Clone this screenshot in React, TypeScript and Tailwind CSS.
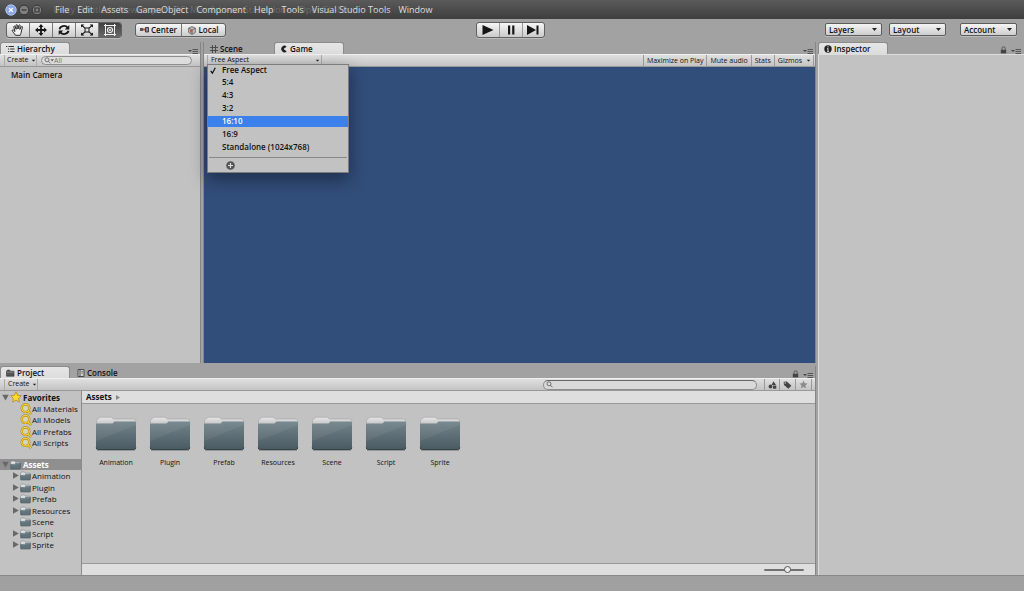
import React, { useState, type ReactNode } from "react";

const MENUS = ["File", "Edit", "Assets", "GameObject", "Component", "Help", "Tools", "Visual Studio Tools", "Window"];
const ASPECTS = ["Free Aspect", "5:4", "4:3", "3:2", "16:10", "16:9", "Standalone (1024x768)"];
const FOLDERS = ["Animation", "Plugin", "Prefab", "Resources", "Scene", "Script", "Sprite"];
const SEARCHES = ["All Materials", "All Models", "All Prefabs", "All Scripts"];

const STRIP = "flex h-[13px] shrink-0 items-center border-y border-t-[#efefef] border-b-[#999] bg-linear-to-b from-[#dfdfdf] to-[#c4c4c4] text-[7px] font-medium";
const GROUP = "flex overflow-hidden rounded-[3px] border border-[#606060] bg-linear-to-b from-[#f6f6f6] to-[#cbcbcb] shadow-[0_1px_0_#bbb]";

function Caret({ className = "" }: { className?: string }) {
  return (
    <svg viewBox="0 0 5 3" className={`h-[3px] w-[5px] shrink-0 ${className}`} aria-hidden="true">
      <path d="M0 0h5L2.5 3z" fill="#222" />
    </svg>
  );
}

function Disclosure({ open = false }: { open?: boolean }) {
  return (
    <svg viewBox="0 0 7 7" className="h-[7px] w-[7px] shrink-0" aria-hidden="true">
      <path d={open ? "M.2.8h6.6L3.5 6.5z" : "M1 .2v6.6L6.8 3.5z"} fill="#686868" />
    </svg>
  );
}

function Lock() {
  return (
    <svg viewBox="0 0 7 8" className="h-[8px] w-[7px]" aria-hidden="true">
      <path d="M2 4V2.5a1.5 1.5 0 0 1 3.2-.3V4" fill="none" stroke="#555" />
      <path d="M.8 3.8h5.4v3.6H.8z" fill="#444" />
    </svg>
  );
}

function PaneMenu() {
  return (
    <svg viewBox="0 0 10 6" className="h-[6px] w-[10px]" aria-hidden="true">
      <path d="M0 2h4L2 4z" fill="#444" />
      <path d="M4.5 1.5H10M4.5 3.5H10M4.5 5.5H10" stroke="#555" />
    </svg>
  );
}

function SmallFolder() {
  return (
    <svg viewBox="0 0 11 10" className="h-[10px] w-[11px] shrink-0" aria-hidden="true">
      <path d="M.5 8V2.5L1.5 1h3l1 1.2h4.5v6z" fill="#dde1e2" stroke="#7b8589" strokeWidth=".6" />
      <path d="M.7 4.4h4l.8-1h5l-.3 5.6H.8z" fill="#61737b" stroke="#465860" strokeWidth=".6" />
      <path d="M1.2 4.8h4l.6-.9h4.2" stroke="#95a3aa" strokeWidth=".5" fill="none" />
    </svg>
  );
}

function SearchGlyph() {
  return (
    <svg viewBox="0 0 12 12" className="h-[12px] w-[12px] shrink-0" aria-hidden="true">
      <circle cx="5.5" cy="5.2" r="3.8" fill="#d6d2bd" stroke="#9c7a0c" strokeWidth="2.2" />
      <path d="M8.2 8.2l2.8 2.8" stroke="#9c7a0c" strokeWidth="2.4" />
      <circle cx="5.5" cy="5.2" r="3.8" fill="none" stroke="#f7d436" strokeWidth="1.3" />
      <path d="M8.2 8.2l2.6 2.6" stroke="#f7d436" strokeWidth="1.4" />
    </svg>
  );
}

function Lens({ arrow = false }: { arrow?: boolean }) {
  return (
    <svg viewBox="0 0 10 7" className="h-[7px] w-[10px] shrink-0" aria-hidden="true">
      <circle cx="3" cy="2.8" r="2" fill="none" stroke="#666" strokeWidth=".9" />
      <path d="M4.5 4.3l2 2" stroke="#666" strokeWidth="1" />
      {arrow && <path d="M6.5 2.2H10L8.2 4.4z" fill="#666" />}
    </svg>
  );
}

function BigFolder({ id }: { id: string }) {
  return (
    <svg viewBox="0 0 42 36" className="h-[36px] w-[42px]" aria-hidden="true">
      <defs>
        <linearGradient id={`${id}-body`} x1="0" y1="0" x2="0" y2="1">
          <stop offset="0" stopColor="#72838a" />
          <stop offset="1" stopColor="#4a5a62" />
        </linearGradient>
        <linearGradient id={`${id}-tab`} x1="0" y1="0" x2="0" y2="1">
          <stop offset="0" stopColor="#e6e6e6" />
          <stop offset="1" stopColor="#bdbdbd" />
        </linearGradient>
      </defs>
      <path d="M1.5 9V5Q1.5 2.5 3.5 2.5L5 1.2h11L18.5 3H39q1.7 0 1.7 2v5H1.5z" fill={`url(#${id}-tab)`} stroke="#a2a2a2" strokeWidth=".6" />
      <path d="M1 8.2Q1 7.4 2 7.4h15.5L19.5 5.5H39.5q1.5 0 1.5 1.2V31.5q0 2-2 2H3q-2 0-2-2z" fill={`url(#${id}-body)`} />
      <path d="M1.3 25L41 9V6.7q0-1.2-1.5-1.2H19.5L17.5 7.4H2q-1 0-1 .8z" fill="#fff" opacity=".06" />
      <path d="M1.2 31.5q0 2 2 2h35.6q2 0 2-2" fill="none" stroke="#34434a" />
      <path d="M2 34.5h38" stroke="#8d8d8d" strokeWidth=".8" />
    </svg>
  );
}

function Tab({ icon, label, active = false }: { icon: ReactNode; label: string; active?: boolean }) {
  return (
    <button
      type="button"
      role="tab"
      aria-selected={active}
      className={`flex h-[12px] w-[70px] items-center gap-[2px] rounded-t-[3px] px-[5px] text-left text-[8px] leading-[11px] font-semibold ${
        active ? "border-x border-t border-[#8b8b8b] bg-linear-to-b from-[#e6e6e6] to-[#dcdcdc]" : "border-x border-t border-transparent"
      }`}
    >
      {icon}
      {label}
    </button>
  );
}

function ToolIcon({ kind }: { kind: string }) {
  return (
    <svg viewBox="0 0 14 12" className="h-[12px] w-[14px]" fill="none" stroke="#161616" aria-hidden="true">
      {kind === "Hand" && (
        <path
          d="M4.5 11.3C3.5 9.5 1.8 8 1.3 6.8c-.2-.9.8-1.2 1.5-.4L4 7.5 2.8 3c-.2-1 .9-1.3 1.3-.4L5.2 5.3 5 1.4c0-1 1.3-1 1.5 0L7 5l.9-3.6c.3-.9 1.4-.6 1.3.4L8.8 5.4l1.5-2.6c.5-.8 1.4-.3 1.2.5L10.4 7c-.2 2-.7 3-1.2 4.3z"
          fill="#f3f3f3"
          strokeWidth=".9"
        />
      )}
      {kind === "Move" && (
        <>
          <path d="M7 2v8M3 6h8" strokeWidth="1.8" />
          <path d="M7 0l2.4 3H4.6zM7 12l2.4-3H4.6zM1 6l3-2.4v4.8zM13 6l-3-2.4v4.8z" fill="#161616" stroke="none" />
        </>
      )}
      {kind === "Rotate" && (
        <>
          <path d="M2.5 5.2C3.2 1.8 8.3.8 10.6 3.6M11.5 6.8C10.8 10.2 5.7 11.2 3.4 8.4" strokeWidth="1.8" />
          <path d="M12.3 1v4.5H7.8zM1.7 11V6.5h4.5z" fill="#161616" stroke="none" />
        </>
      )}
      {kind === "Scale" && (
        <>
          <path d="M5 4h4v4H5z" strokeWidth="1" />
          <path d="M2 1.5l3 2.7M12 1.5L9 4.2M2 10.5l3-2.7M12 10.5L9 7.8" strokeWidth="1.1" />
          <path d="M1 .5h3.4L1 3.6zM13 .5H9.6L13 3.6zM1 11.5h3.4L1 8.4zM13 11.5H9.6L13 8.4z" fill="#161616" stroke="none" />
        </>
      )}
      {kind === "Rect" && (
        <>
          <path d="M2.5 0v12M11.5 0v12M1 1.5h12M1 10.5h12" stroke="#f2f2f2" strokeWidth="1" />
          <circle cx="7" cy="6" r="2.5" stroke="#f2f2f2" strokeWidth="1.1" />
          <circle cx="7" cy="6" r="1" fill="#f2f2f2" stroke="none" />
        </>
      )}
    </svg>
  );
}

function TopSelect({ label }: { label: string }) {
  return (
    <label className="relative flex w-[57px] items-center">
      <select
        aria-label={label}
        className="h-[13px] w-full appearance-none rounded-[2px] border border-[#5c5c5c] bg-linear-to-b from-[#f4f4f4] to-[#cecece] px-[3px] text-[8px] leading-[11px] font-semibold shadow-[0_1px_0_#bbb]"
      >
        <option>{label}</option>
      </select>
      <Caret className="pointer-events-none absolute right-[5px]" />
    </label>
  );
}

function Toolbar() {
  const [tool, setTool] = useState("Rect");
  return (
    <div className="relative flex h-[23px] shrink-0 items-start pt-[3px] pr-[7px] pl-[6px]">
      <div className={GROUP}>
        {["Hand", "Move", "Rotate", "Scale", "Rect"].map((name) => (
          <button
            key={name}
            type="button"
            aria-label={`${name} tool`}
            aria-pressed={tool === name}
            onClick={() => setTool(name)}
            className={`flex h-[14px] w-[23px] items-center justify-center border-r border-[#777] last:w-[22px] last:border-r-0 ${
              tool === name ? "bg-linear-to-b from-[#404040] to-[#6a6a6a]" : ""
            }`}
          >
            <ToolIcon kind={name} />
          </button>
        ))}
      </div>
      <div className={`${GROUP} mt-px ml-[13px] text-[8px] font-semibold`}>
        <button type="button" className="flex h-[12px] w-[46px] items-center justify-center gap-[2px] border-r border-[#777]">
          <svg viewBox="0 0 9 6" className="h-[6px] w-[9px]" aria-hidden="true">
            <path d="M0 1h3v3H0z" fill="#555" />
            <path d="M3 1.5h2v2H3z" fill="#c35436" />
            <path d="M5.5.5h3v4.5h-3z" fill="#8b8b8b" stroke="#222" strokeWidth=".8" />
          </svg>
          Center
        </button>
        <button type="button" className="flex h-[12px] w-[43px] items-center justify-center gap-[2px]">
          <svg viewBox="0 0 8 9" className="h-[9px] w-[8px]" aria-hidden="true">
            <path d="M4 .5l3.4 1.7v4.2L4 8.5.6 6.4V2.2z" fill="#bbb" stroke="#555" strokeWidth=".7" />
            <path d="M.6 2.2L4 4l3.4-1.8M4 4v4.3" fill="none" stroke="#555" strokeWidth=".7" />
            <path d="M2 4h2.4v2.5H2z" fill="#cb5a3c" />
          </svg>
          Local
        </button>
      </div>
      <div className="pointer-events-none absolute inset-x-0 top-[3px] flex justify-center">
        <div className={`${GROUP} pointer-events-auto mr-[4px]`}>
          {[
            ["Play", "M.5 1l11 5-11 5z"],
            ["Pause", "M3 1.5h2.2v9H3zM7.2 1.5h2.2v9H7.2z"],
            ["Step", "M0 1l9 5-9 5zM9.5 1.5h2v9h-2z"],
          ].map(([name, d]) => (
            <button
              key={name}
              type="button"
              aria-label={name}
              className="flex h-[14px] w-[23px] items-center justify-center border-r border-[#999] last:w-[21px] last:border-r-0"
            >
              <svg viewBox="0 0 12 12" className="h-[12px] w-[12px]" aria-hidden="true">
                <path d={d} fill="#151515" />
              </svg>
            </button>
          ))}
        </div>
      </div>
      <div className="ml-auto flex gap-[7px] pt-px">
        <TopSelect label="Layers" />
        <TopSelect label="Layout" />
        <div className="ml-[7px]">
          <TopSelect label="Account" />
        </div>
      </div>
    </div>
  );
}

function Hierarchy() {
  return (
    <section className="flex w-[201px] shrink-0 flex-col border-r border-[#858585]">
      <div className="flex h-[12px] items-end justify-between">
        <Tab
          active
          label="Hierarchy"
          icon={
            <svg viewBox="0 0 9 8" className="h-[8px] w-[9px]" aria-hidden="true">
              <path d="M0 1.5h1.3M2.5 1.5H8M2 4h1.2M4.2 4H8.5M2 6.5h1.2M4.2 6.5H8.5" stroke="#333" />
            </svg>
          }
        />
        <span className="pr-[2px]"><PaneMenu /></span>
      </div>
      <div className={STRIP}>
        <button type="button" className="ml-[4px] flex h-full w-[33px] items-center justify-between border-x border-[#aaa] pl-[2px]">
          Create <Caret className="mb-px scale-75" />
        </button>
        <label className="mr-[8px] ml-[4px] flex h-[9px] flex-1 items-center rounded-full border border-[#8d8d8d] bg-[#dcdcdc] px-[2px]">
          <Lens arrow />
          <input aria-label="Search hierarchy" placeholder="All" className="w-full min-w-0 bg-transparent text-[7px] leading-[7px] outline-none placeholder:text-[#777]" />
        </label>
      </div>
      <ul className="flex-1 bg-[#c2c2c2] pt-[2px] pl-[11px] text-[8px] leading-[11px] font-semibold">
        <li>Main Camera</li>
      </ul>
    </section>
  );
}

function AspectMenu() {
  return (
    <ul role="menu" className="absolute top-[9px] left-[3px] z-10 w-[142px] border border-[#7d7d7d] bg-[#c2c2c2] text-[8px] leading-[10px] font-semibold shadow-[0_6px_16px_rgba(0,0,0,0.4)]">
      {ASPECTS.map((name, i) => (
        <li key={name} role="none" className="h-[13px] first:h-[12px]">
          <button
            type="button"
            role="menuitem"
            className={`flex h-[11px] w-full items-center pb-px text-left ${name === "16:10" ? "bg-[#3c80ec] text-white" : ""}`}
          >
            <span className="w-[14px] pl-[2px]">
              {i === 0 && (
                <svg viewBox="0 0 6 7" className="h-[7px] w-[6px]" aria-hidden="true">
                  <path d="M.7 3.8l1.7 2.4L5.3.7" fill="none" stroke="#111" strokeWidth="1.2" />
                </svg>
              )}
            </span>
            {name}
          </button>
        </li>
      ))}
      <li role="none" className="mx-[1px] mt-[2px] flex h-[15px] items-center border-t border-[#888] pl-[17px]">
        <button type="button" aria-label="Add aspect">
          <svg viewBox="0 0 9 9" className="h-[9px] w-[9px]" aria-hidden="true">
            <circle cx="4.5" cy="4.5" r="4.3" fill="#555" />
            <path d="M4.5 2v5M2 4.5h5" stroke="#ddd" strokeWidth="1.2" />
          </svg>
        </button>
      </li>
    </ul>
  );
}

function GameView() {
  return (
    <section className="ml-[2px] flex min-w-0 flex-1 flex-col border-x border-[#858585]">
      <div className="flex h-[12px] items-end">
        <Tab
          label="Scene"
          icon={
            <svg viewBox="0 0 8 8" className="h-[8px] w-[8px]" aria-hidden="true">
              <path d="M2.5 0v8M5.5 0v8M0 2.5h8M0 5.5h8" stroke="#444" strokeWidth=".9" />
            </svg>
          }
        />
        <Tab
          active
          label="Game"
          icon={
            <svg viewBox="0 0 8 8" className="h-[8px] w-[8px]" aria-hidden="true">
              <path d="M6.6 1.4A3.3 3.3 0 1 0 6.6 6.6L5 5H4.2V3H5z" fill="#222" />
            </svg>
          }
        />
        <span className="ml-auto pr-[2px]"><PaneMenu /></span>
      </div>
      <div className={`${STRIP} relative`}>
        <button type="button" aria-haspopup="menu" aria-expanded="true" className="ml-[3px] flex h-full w-[115px] items-center justify-between border-x border-[#aaa] pr-px pl-[3px]">
          Free Aspect <Caret className="scale-75" />
        </button>
        <AspectMenu />
        <div className="ml-auto flex h-full items-center">
          {["Maximize on Play", "Mute audio", "Stats"].map((t) => (
            <button key={t} type="button" className="h-full border-l border-[#999] px-[3px] leading-[11px] whitespace-nowrap">{t}</button>
          ))}
          <button type="button" className="mr-px flex h-full items-center gap-[4px] border-x border-[#999] pr-[2px] pl-[3px] leading-[11px]">
            Gizmos <Caret className="scale-75" />
          </button>
        </div>
      </div>
      <div className="flex-1 bg-[#314d79]" />
    </section>
  );
}

function ProjectTree() {
  return (
    <nav aria-label="Project folders" className="w-[82px] shrink-0 overflow-hidden border-r border-[#8b8b8b] bg-[#c2c2c2] text-[8px] leading-[11px] font-medium whitespace-nowrap">
      <div className="flex h-[12px] items-center gap-[1px] pl-[2px] font-bold">
        <Disclosure open />
        <svg viewBox="0 0 12 12" className="h-[12px] w-[12px] shrink-0" aria-hidden="true">
          <path d="M6 .8l1.6 3.5 3.8.4-2.8 2.6.8 3.8L6 9.2l-3.4 1.9.8-3.8L.6 4.7l3.8-.4z" fill="#ffd92e" stroke="#a88413" strokeWidth=".7" />
        </svg>
        Favorites
      </div>
      <ul>
        {SEARCHES.map((s) => (
          <li key={s} className="even:pb-px">
            <a href="#search" className="flex h-[11px] items-center pl-[20px]"><SearchGlyph />{s}</a>
          </li>
        ))}
      </ul>
      <div className="mt-[10px] flex h-[11px] items-center gap-[1px] bg-[#8f8f8f] pl-[2px] font-bold text-white">
        <Disclosure open /><SmallFolder /><span className="pl-px">Assets</span>
      </div>
      <ul>
        {FOLDERS.map((f) => (
          <li key={f} className="odd:pb-px">
            <a href="#folder" className="flex h-[11px] items-center gap-[1px] pl-[12px]">
              {f === "Scene" ? <span className="w-[7px]" /> : <Disclosure />}
              <SmallFolder />
              <span>{f}</span>
            </a>
          </li>
        ))}
      </ul>
    </nav>
  );
}

function Project() {
  return (
    <section className="flex min-h-0 flex-[209_1_0px] flex-col border-r border-[#858585]">
      <div className="flex h-[12px] items-end">
        <Tab
          active
          label="Project"
          icon={
            <svg viewBox="0 0 9 8" className="h-[8px] w-[9px]" aria-hidden="true">
              <path d="M.5 2.5L1.5 1h2l1 1.2H8v5H.5z" fill="#555" stroke="#333" strokeWidth=".6" />
              <path d="M1 3.2h6.8" stroke="#aaa" strokeWidth=".6" />
            </svg>
          }
        />
        <Tab
          label="Console"
          icon={
            <svg viewBox="0 0 8 8" className="ml-px h-[8px] w-[8px]" aria-hidden="true">
              <path d="M1 .5h6v7H1zM3 .5v7" fill="#ccc" stroke="#333" strokeWidth=".8" />
              <path d="M4.5 2.5h1.2M4.5 4h1.2" stroke="#333" strokeWidth=".7" />
            </svg>
          }
        />
        <span className="ml-auto flex items-end gap-[4px] pr-[2px]"><Lock /><PaneMenu /></span>
      </div>
      <div className={STRIP}>
        <button type="button" className="ml-[4px] flex h-full w-[34px] items-center justify-between border-x border-[#aaa] pl-[3px]">
          Create <Caret className="mb-px scale-75" />
        </button>
        <label className="mr-[7px] ml-auto flex h-[10px] w-[214px] items-center rounded-full border border-[#8d8d8d] border-t-[#666] bg-[#d9d9d9] px-[2px]">
          <Lens />
          <input aria-label="Search project" className="w-full min-w-0 bg-transparent text-[7px] leading-[8px] outline-none" />
        </label>
        <button type="button" aria-label="Filter by type" className="flex h-full w-[15px] items-center justify-center border-l border-[#999]">
          <svg viewBox="0 0 9 8" className="h-[8px] w-[9px]" aria-hidden="true">
            <path d="M5.5.3L8 4H3.5zM5 4.5h3.3v3.2H5z" fill="#444" />
            <circle cx="2.5" cy="5.5" r="1.9" fill="#444" />
          </svg>
        </button>
        <button type="button" aria-label="Filter by label" className="flex h-full w-[16px] items-center justify-center border-l border-[#999]">
          <svg viewBox="0 0 9 8" className="h-[8px] w-[9px]" aria-hidden="true">
            <path d="M.6.8L3.8.4l4.6 4.3-3 3L1 4z" fill="#444" />
            <circle cx="2.2" cy="2" r=".7" fill="#ddd" />
          </svg>
        </button>
        <button type="button" aria-label="Save search" className="mr-[3px] flex h-full w-[17px] items-center justify-center border-x border-[#999]">
          <svg viewBox="0 0 12 12" className="h-[9px] w-[9px]" aria-hidden="true">
            <path d="M6 .8l1.6 3.5 3.8.4-2.8 2.6.8 3.8L6 9.2l-3.4 1.9.8-3.8L.6 4.7l3.8-.4z" fill="#8b8b8b" />
          </svg>
        </button>
      </div>
      <div className="flex min-h-0 flex-1">
        <ProjectTree />
        <div className="flex min-w-0 flex-1 flex-col bg-[#c2c2c2]">
          <div className="flex h-[13px] shrink-0 items-center gap-[4px] border-b border-[#999] bg-[#dedede] pl-[4px] text-[8px] font-bold">
            Assets
            <svg viewBox="0 0 4 5" className="h-[5px] w-[4px]" aria-hidden="true"><path d="M0 0l4 2.5L0 5z" fill="#888" /></svg>
          </div>
          <ul className="flex flex-1 flex-wrap content-start pt-[12px] pl-[7px] text-[7px] font-medium">
            {FOLDERS.map((f) => (
              <li key={f}>
                <a href="#folder" className="flex w-[54px] flex-col items-center gap-[5px] leading-[11px]">
                  <BigFolder id={f} />
                  {f}
                </a>
              </li>
            ))}
          </ul>
          <div className="flex h-[12px] shrink-0 items-center justify-end border-t border-[#999] bg-[#dedede] pr-[11px]">
            <input
              type="range"
              aria-label="Icon size"
              defaultValue={60}
              className="h-[7px] w-[40px] appearance-none bg-transparent [&::-webkit-slider-runnable-track]:h-[2px] [&::-webkit-slider-runnable-track]:rounded-full [&::-webkit-slider-runnable-track]:bg-[#707070] [&::-webkit-slider-thumb]:-mt-[3px] [&::-webkit-slider-thumb]:size-[7px] [&::-webkit-slider-thumb]:appearance-none [&::-webkit-slider-thumb]:rounded-full [&::-webkit-slider-thumb]:border [&::-webkit-slider-thumb]:border-[#555] [&::-webkit-slider-thumb]:bg-[#eee]"
            />
          </div>
        </div>
      </div>
    </section>
  );
}

function Inspector() {
  return (
    <section className="ml-[2px] flex w-[206px] shrink-0 flex-col">
      <div className="flex h-[12px] items-end">
        <Tab
          active
          label="Inspector"
          icon={
            <svg viewBox="0 0 8 8" className="h-[8px] w-[8px]" aria-hidden="true">
              <circle cx="4" cy="4" r="3.7" fill="#222" />
              <path d="M4 1.2v1.3M4 3.3v3.2M3 6.3h2M3.2 3.5H4" stroke="#eee" strokeWidth=".9" />
            </svg>
          }
        />
        <span className="ml-auto flex items-end gap-[4px] pr-[3px]"><Lock /><PaneMenu /></span>
      </div>
      <div className="flex-1 border-t border-l border-[#ddd] bg-[#c2c2c2]" />
    </section>
  );
}

function WindowDot({ label, d, active = false }: { label: string; d: string; active?: boolean }) {
  return (
    <button type="button" aria-label={label}>
      <svg viewBox="0 0 12 12" className="h-[12px] w-[12px]" aria-hidden="true">
        <circle cx="6" cy="6" r={active ? 5.2 : 4.8} fill={active ? "#8aa6e4" : "#808080"} stroke={active ? "#b4c8f4" : "#363636"} />
        <path d={d} fill="none" stroke={active ? "#fff" : "#333"} strokeWidth="1.2" />
      </svg>
    </button>
  );
}

export default function App() {
  return (
    <div className="flex h-screen flex-col overflow-hidden bg-[#a2a2a2] font-['Open_Sans','Noto_Sans',sans-serif] text-[#101010]">
      <header className="relative flex h-[19px] shrink-0 items-center bg-linear-to-b from-[#5a5a5a] to-[#3e3e3e] pl-[5px] text-[9px]">
        <div className="flex gap-[1px]">
          <WindowDot active label="Close" d="M4 4l4 4M8 4l-4 4" />
          <WindowDot label="Minimize" d="M3.5 6h5" />
          <WindowDot label="Maximize" d="M4 4h4v4H4z" />
        </div>
        <span className="absolute left-[53px] whitespace-nowrap text-[#6b6b6b]" aria-hidden="true">
          Unity Untitled - NewProject - PC, Mac &amp; Linux Standalone &lt;OpenGL 4.5&gt;
        </span>
        <nav aria-label="Main menu" className="relative ml-[12px] flex gap-[8px] text-[#dedede]">
          {MENUS.map((m) => (
            <button key={m} type="button" className="whitespace-nowrap">{m}</button>
          ))}
        </nav>
      </header>
      <Toolbar />
      <main className="flex min-h-0 flex-1">
        <div className="flex min-w-0 flex-1 flex-col gap-[3px]">
          <div className="flex min-h-0 flex-[321_1_0px]">
            <Hierarchy />
            <GameView />
          </div>
          <Project />
        </div>
        <Inspector />
      </main>
      <footer className="h-[16px] shrink-0 border-t border-[#888] bg-[#a0a0a0]" />
    </div>
  );
}
